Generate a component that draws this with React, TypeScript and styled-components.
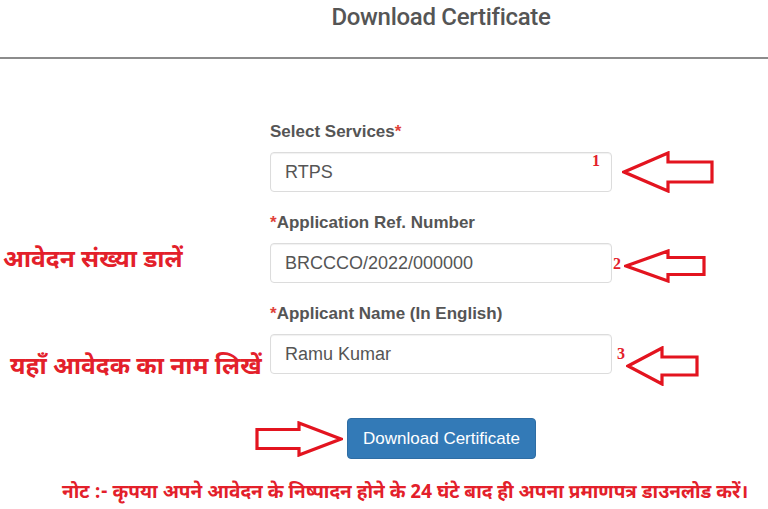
import styled, { createGlobalStyle } from "styled-components";

const GlobalStyle = createGlobalStyle`
  html, body {
    margin: 0;
    padding: 0;
    background: #ffffff;
  }
  body {
    font-family: "Liberation Sans", Arial, sans-serif;
  }
`;

const HINDI_FONT = `"Noto Sans Devanagari", "Lohit Devanagari", "Noto Sans", "DejaVu Sans", sans-serif`;

const StyledPage = styled.div`
  width: 768px;
  height: 509px;
  overflow: hidden;
`;

const StyledHeader = styled.header`
  height: 57px;
  border-bottom: 2px solid #8c8c8c;
  display: grid;
  grid-template-columns: 270px 342px 1fr;
`;

const StyledTitleH1 = styled.h1`
  grid-column: 2;
  margin: 0;
  padding-top: 3px;
  text-align: center;
  font-family: Roboto, "Liberation Sans", sans-serif;
  font-weight: 500;
  font-size: 24px;
  line-height: 28px;
  color: #555555;
  letter-spacing: -0.3px;
  white-space: nowrap;
`;

const StyledForm = styled.form`
  padding-top: 63px;
`;

const StyledFieldRow = styled.div`
  display: grid;
  grid-template-columns: 270px 342px 1fr;
  grid-auto-rows: 70px;
  margin-bottom: 21px;
`;

const StyledNoteCell = styled.div<{ offset: number; indent: number }>`
  padding-top: ${({ offset }) => offset}px;
  padding-left: ${({ indent }) => indent}px;
`;

const StyledHindiNote = styled.span`
  display: block;
  font-family: ${HINDI_FONT};
  font-weight: 700;
  font-size: 24.5px;
  line-height: 28px;
  color: #e3202a;
  white-space: nowrap;
`;

const StyledField = styled.div`
  display: flex;
  flex-direction: column;
`;

const StyledLabel = styled.label`
  display: block;
  height: 20px;
  margin: 0 0 10px 0;
  font-weight: 700;
  font-size: 17px;
  line-height: 20px;
  color: #555555;
  white-space: nowrap;
`;

const StyledRequired = styled.span`
  color: #e0413a;
`;

const StyledInputWrap = styled.div`
  position: relative;
`;

const StyledInput = styled.input`
  display: block;
  box-sizing: border-box;
  width: 342px;
  height: 40px;
  margin: 0;
  padding: 0 14px;
  border: 1px solid #dcdcdc;
  border-radius: 4px;
  box-shadow: inset 0 1px 1px rgba(0, 0, 0, 0.06);
  font-family: "Liberation Sans", Arial, sans-serif;
  font-size: 18px;
  color: #555555;
  background: #ffffff;
  outline: none;
`;

const StyledMarker = styled.span<{ right: number; top: number }>`
  position: absolute;
  right: ${({ right }) => right}px;
  top: ${({ top }) => top}px;
  font-family: "Liberation Serif", "Times New Roman", serif;
  font-weight: 700;
  font-size: 16px;
  line-height: 16px;
  color: #e3202a;
`;

const StyledArrowCell = styled.div<{ offset: number; indent: number }>`
  padding-top: ${({ offset }) => offset}px;
  padding-left: ${({ indent }) => indent}px;
  svg {
    display: block;
  }
`;

const StyledButtonRow = styled.div`
  display: flex;
  align-items: center;
  gap: 4px;
  padding: 23px 0 0 255px;
  svg {
    display: block;
  }
`;

const StyledButton = styled.button`
  box-sizing: border-box;
  width: 189px;
  height: 41px;
  padding: 0;
  border: 1px solid #2e6da4;
  border-radius: 4px;
  background-color: #337ab7;
  color: #ffffff;
  font-family: "Liberation Sans", Arial, sans-serif;
  font-size: 17px;
  cursor: pointer;
`;

const StyledFooterNote = styled.p`
  margin: 23px 0 0;
  padding-left: 62px;
  font-family: ${HINDI_FONT};
  font-weight: 700;
  font-size: 19px;
  line-height: 24px;
  color: #e3202a;
  white-space: nowrap;
`;

type ArrowProps = {
  width: number;
  height: number;
  headLength: number;
  shaft: number;
  direction: "left" | "right";
};

function Arrow({ width, height, headLength, shaft, direction }: ArrowProps) {
  const s = 2;
  const w = width - s;
  const h = height - s;
  const mid = height / 2;
  const sTop = mid - shaft / 2;
  const sBottom = mid + shaft / 2;
  const d =
    direction === "left"
      ? `M${s} ${mid} L${headLength} ${s} L${headLength} ${sTop} L${w} ${sTop} L${w} ${sBottom} L${headLength} ${sBottom} L${headLength} ${h} Z`
      : `M${w} ${mid} L${width - headLength} ${s} L${width - headLength} ${sTop} L${s} ${sTop} L${s} ${sBottom} L${width - headLength} ${sBottom} L${width - headLength} ${h} Z`;
  return (
    <svg width={width} height={height} viewBox={`0 0 ${width} ${height}`}>
      <path d={d} fill="none" stroke="#e3141f" strokeWidth={3.2} strokeLinejoin="miter" />
    </svg>
  );
}

type Field = {
  id: string;
  label: string;
  requiredFirst: boolean;
  value: string;
  marker: string;
  markerRight: number;
  markerTop: number;
  note?: string;
  noteOffset: number;
  noteIndent: number;
  arrow: { width: number; height: number; headLength: number; shaft: number; offset: number; indent: number };
};

const fields: Field[] = [
  {
    id: "service",
    label: "Select Services",
    requiredFirst: false,
    value: "RTPS",
    marker: "1",
    markerRight: 12,
    markerTop: 1,
    noteOffset: 0,
    noteIndent: 0,
    arrow: { width: 92, height: 42, headLength: 46, shaft: 20, offset: 29, indent: 10 },
  },
  {
    id: "refNumber",
    label: "Application Ref. Number",
    requiredFirst: true,
    value: "BRCCCO/2022/000000",
    marker: "2",
    markerRight: -9,
    markerTop: 13,
    note: "आवेदन संख्या डालें",
    noteOffset: 34,
    noteIndent: 3,
    arrow: { width: 82, height: 34, headLength: 44, shaft: 17, offset: 36, indent: 12 },
  },
  {
    id: "applicantName",
    label: "Applicant Name (In English)",
    requiredFirst: true,
    value: "Ramu Kumar",
    marker: "3",
    markerRight: -13,
    markerTop: 12,
    note: "यहाँ आवेदक का नाम लिखें",
    noteOffset: 50,
    noteIndent: 10,
    arrow: { width: 73, height: 40, headLength: 36, shaft: 18, offset: 42, indent: 14 },
  },
];

export default function App() {
  return (
    <StyledPage>
      <GlobalStyle />
      <StyledHeader>
        <StyledTitleH1>Download Certificate</StyledTitleH1>
      </StyledHeader>
      <StyledForm onSubmit={(e) => e.preventDefault()}>
        {fields.map((field) => (
          <StyledFieldRow key={field.id}>
            <StyledNoteCell offset={field.noteOffset} indent={field.noteIndent}>
              {field.note && <StyledHindiNote>{field.note}</StyledHindiNote>}
            </StyledNoteCell>
            <StyledField>
              <StyledLabel htmlFor={field.id}>
                {field.requiredFirst && <StyledRequired>*</StyledRequired>}
                {field.label}
                {!field.requiredFirst && <StyledRequired>*</StyledRequired>}
              </StyledLabel>
              <StyledInputWrap>
                <StyledInput id={field.id} name={field.id} defaultValue={field.value} readOnly />
                <StyledMarker right={field.markerRight} top={field.markerTop}>
                  {field.marker}
                </StyledMarker>
              </StyledInputWrap>
            </StyledField>
            <StyledArrowCell offset={field.arrow.offset} indent={field.arrow.indent}>
              <Arrow
                width={field.arrow.width}
                height={field.arrow.height}
                headLength={field.arrow.headLength}
                shaft={field.arrow.shaft}
                direction="left"
              />
            </StyledArrowCell>
          </StyledFieldRow>
        ))}
        <StyledButtonRow>
          <Arrow width={88} height={36} headLength={44} shaft={19} direction="right" />
          <StyledButton type="submit">Download Certificate</StyledButton>
        </StyledButtonRow>
        <StyledFooterNote>
          नोट :- कृपया अपने आवेदन के निष्पादन होने के 24 घंटे बाद ही अपना प्रमाणपत्र डाउनलोड करें।
        </StyledFooterNote>
      </StyledForm>
    </StyledPage>
  );
}
